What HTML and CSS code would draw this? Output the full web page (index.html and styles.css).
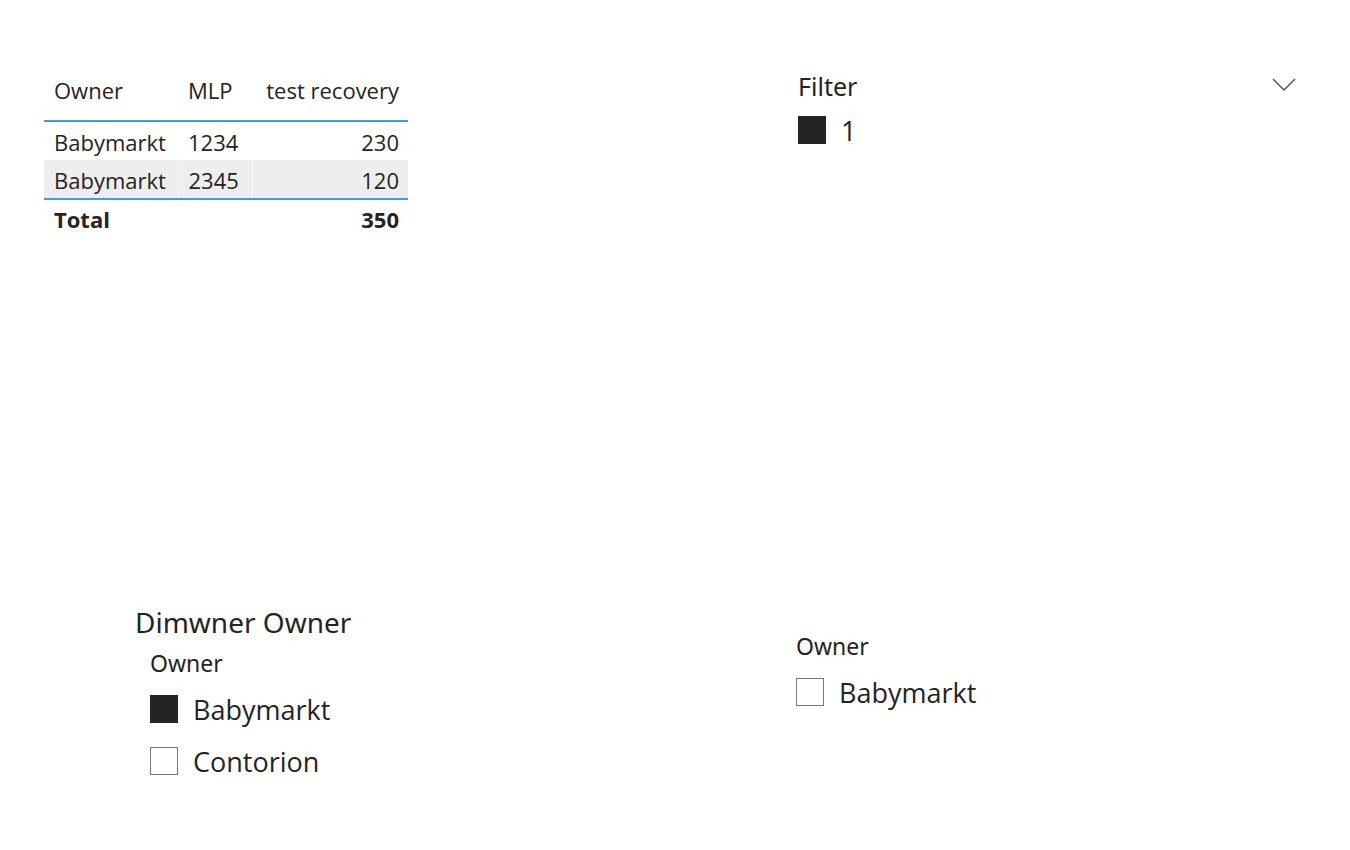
FILE: index.html
```html
<!DOCTYPE html>
<html>
<head>
<meta charset="utf-8">
<link rel="stylesheet" href="styles.css">
</head>
<body>
<div class="canvas">
  <div class="visual table-visual">
    <table class="grid">
      <thead>
        <tr><th class="c-owner">Owner</th><th class="c-mlp">MLP</th><th class="c-rec num">test recovery</th></tr>
      </thead>
      <tbody>
        <tr><td>Babymarkt</td><td>1234</td><td class="num">230</td></tr>
        <tr class="alt"><td>Babymarkt</td><td>2345</td><td class="num">120</td></tr>
      </tbody>
      <tfoot>
        <tr><td>Total</td><td></td><td class="num">350</td></tr>
      </tfoot>
    </table>
  </div>

  <div class="visual filter-visual">
    <div class="filter-head">
      <span class="slicer-title">Filter</span>
      <svg class="chevron" width="24" height="14" viewBox="0 0 24 14"><path d="M1 1 L12 12 L23 1" fill="none" stroke="#505050" stroke-width="1.4"/></svg>
    </div>
    <div class="item"><span class="box checked"></span><span class="label">1</span></div>
  </div>

  <div class="visual dim-visual">
    <div class="visual-title">Dimwner Owner</div>
    <div class="slicer">
      <div class="slicer-head">Owner</div>
      <div class="item"><span class="box checked"></span><span class="label">Babymarkt</span></div>
      <div class="item"><span class="box"></span><span class="label">Contorion</span></div>
    </div>
  </div>

  <div class="visual owner-visual">
    <div class="slicer-head">Owner</div>
    <div class="item"><span class="box"></span><span class="label">Babymarkt</span></div>
  </div>
</div>
</body>
</html>
```
FILE: styles.css
```css
html, body {
  margin: 0;
  padding: 0;
  background: #ffffff;
}
body {
  font-family: "Open Sans", "Noto Sans", sans-serif;
  color: #252423;
}
.canvas {
  position: relative;
  width: 1350px;
  height: 850px;
}
.visual {
  position: absolute;
}
.table-visual {
  left: 44px;
  top: 70px;
  width: 364px;
}
.grid {
  border-collapse: collapse;
  table-layout: fixed;
  width: 364px;
  font-size: 22px;
}
.grid th {
  font-weight: normal;
  text-align: left;
  height: 50px;
  line-height: 40px;
  padding: 0 9px 0 10px;
  border-bottom: 2px solid #3e9ce6;
  vertical-align: top;
  white-space: nowrap;
}
.grid td {
  height: 36px;
  padding: 2px 9px 0 10px;
  white-space: nowrap;
  line-height: 36px;
}
.grid .num { text-align: right; }
.c-owner { width: 115px; }
.c-mlp { width: 55px; }
.grid tr.alt td {
  background: #eeeeee;
  border-left: 1px solid #f6f6f6;
}
.grid tr.alt td:first-child { border-left: none; }
.grid tbody tr:last-child td {
  border-bottom: 2px solid #3e9ce6;
}
.grid tfoot td {
  font-weight: bold;
  height: 38px;
  line-height: 38px;
  padding-top: 0;
}

.filter-visual {
  left: 798px;
  top: 70px;
  width: 500px;
}
.filter-head {
  display: flex;
  align-items: center;
  justify-content: space-between;
  height: 32px;
}
.chevron { margin-right: 2px; margin-top: -2px; }
.slicer-title, .slicer-head, .visual-title {
  font-family: "Noto Sans", "Open Sans", sans-serif;
}
.slicer-title { font-size: 25px; }
.visual-title { font-size: 28px; margin-bottom: 6px; line-height: 38px; }
.slicer-head { font-size: 23px; margin-bottom: 4px; line-height: 32px; }

.item {
  display: flex;
  align-items: center;
  height: 52px;
  gap: 15px;
}
.filter-visual .item { height: 30px; margin-top: 13px; }
.box {
  box-sizing: border-box;
  width: 28px;
  height: 28px;
  border: 1.5px solid #777777;
  background: #ffffff;
  flex: none;
}
.box.checked {
  background: #252423;
  border-color: #252423;
}
.label { font-size: 27px; }

.dim-visual {
  left: 135px;
  top: 603px;
}
.dim-visual .slicer { padding-left: 15px; }
.owner-visual {
  left: 796px;
  top: 630px;
}
```
